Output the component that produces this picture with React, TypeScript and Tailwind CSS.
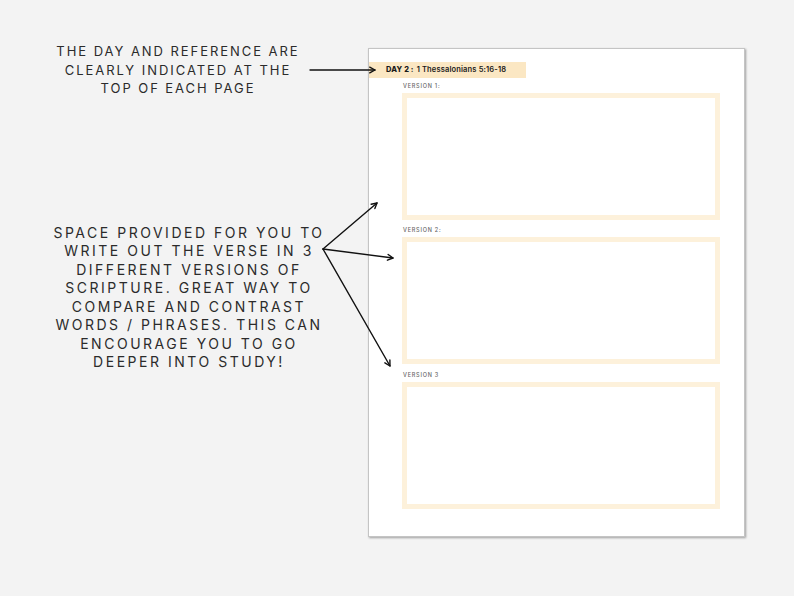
const FONT = { fontFamily: 'Inter, "Open Sans", sans-serif' };

const VERSIONS = [
  { label: 'VERSION 1:', mt: 'mt-[5px]' },
  { label: 'VERSION 2:', mt: 'mt-[7px]' },
  { label: 'VERSION 3', mt: 'mt-[8px]' },
];

function Arrows() {
  // annotation arrows drawn over the canvas
  const head = (x: number, y: number, fx: number, fy: number) => {
    const a = Math.atan2(y - fy, x - fx);
    const l = 6;
    const p1 = [x - l * Math.cos(a - 0.5), y - l * Math.sin(a - 0.5)];
    const p2 = [x - l * Math.cos(a + 0.5), y - l * Math.sin(a + 0.5)];
    return `M${p1[0]},${p1[1]} L${x},${y} L${p2[0]},${p2[1]}`;
  };
  const lines = [
    [310, 70, 375, 70],
    [323, 249, 377, 203],
    [323, 249, 393, 258],
    [323, 249, 390, 366],
  ];
  return (
    <svg className="pointer-events-none absolute inset-0" width="794" height="596" viewBox="0 0 794 596">
      {lines.map(([x1, y1, x2, y2], i) => (
        <g key={i} stroke="#111" strokeWidth={1.4} fill="none" strokeLinecap="round" strokeLinejoin="round">
          <line x1={x1} y1={y1} x2={x2} y2={y2} />
          <path d={head(x2, y2, x1, y1)} />
        </g>
      ))}
    </svg>
  );
}

export default function App() {
  return (
    <div className="relative flex h-[596px] w-[794px] overflow-hidden bg-[#f3f3f3]" style={FONT}>
      <div className="flex w-[368px] shrink-0 flex-col leading-[18.5px] text-[#2b2b2b]">
        <p className="ml-[40px] mt-[42px] w-[276px] text-center text-[13px] tracking-[0.15em]">
          THE DAY AND REFERENCE ARE
          <br />
          CLEARLY INDICATED AT THE
          <br />
          TOP OF EACH PAGE
        </p>
        <p className="ml-[30px] mt-[126px] w-[318px] text-center text-[14px] tracking-[0.18em]">
          SPACE PROVIDED FOR YOU TO
          <br />
          WRITE OUT THE VERSE IN 3
          <br />
          DIFFERENT VERSIONS OF
          <br />
          SCRIPTURE. GREAT WAY TO
          <br />
          COMPARE AND CONTRAST
          <br />
          WORDS / PHRASES. THIS CAN
          <br />
          ENCOURAGE YOU TO GO
          <br />
          DEEPER INTO STUDY!
        </p>
      </div>

      <div className="mt-[48px] h-[489px] w-[377px] border border-[#c4c4c4] bg-white shadow-[1px_1px_2px_rgba(0,0,0,0.35)]">
        <div className="mt-[13px] flex h-[16px] w-[157px] items-center bg-[#fbe7c3] pl-[17px] text-[7.5px] tracking-[0.02em] text-[#1a1a1a]">
          <span className="font-extrabold">DAY 2 :</span>
          <span className="ml-[3px] font-semibold">1 Thessalonians 5:16-18</span>
        </div>
        <div className="pl-[33px] pr-[24px]">
          {VERSIONS.map((v) => (
            <div key={v.label} className={v.mt}>
              <div className="ml-[1px] h-[6px] text-[5.5px] leading-[6px] font-medium tracking-[0.14em] text-[#666]">
                {v.label}
              </div>
              <div className="mt-[4px] h-[127px] w-[318px] border-[5px] border-[#fdf1db] bg-white" />
            </div>
          ))}
        </div>
      </div>

      <Arrows />
    </div>
  );
}
